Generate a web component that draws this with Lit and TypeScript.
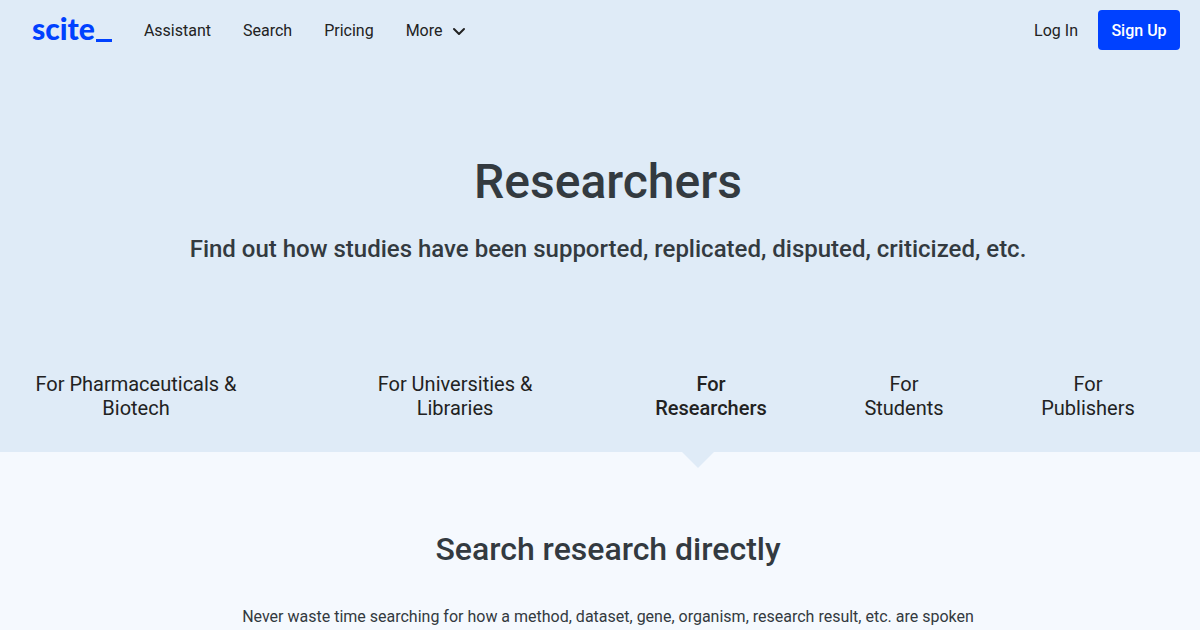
import { LitElement, html, css } from "lit";
import { customElement, state } from "lit/decorators.js";
import { classMap } from "lit/directives/class-map.js";

const TABS: [string, string][] = [
  ["For Pharmaceuticals &", "Biotech"],
  ["For Universities &", "Libraries"],
  ["For", "Researchers"],
  ["For", "Students"],
  ["For", "Publishers"],
];

@customElement("app-root")
export class AppRoot extends LitElement {
  @state() private active = 2;

  static styles = css`
    :host {
      display: block;
      min-height: 100vh;
      overflow-x: hidden;
      background: #f5f9fe;
      color: #333a40;
      font-family: Roboto, "Liberation Sans", sans-serif;
      font-size: 16px;
      line-height: 24px;
    }
    a {
      color: inherit;
      text-decoration: none;
    }
    .hero {
      position: relative;
      background: #dfebf7;
    }
    .bar {
      display: flex;
      align-items: center;
      height: 60px;
      padding: 0 20px 0 32px;
      color: #222222;
    }
    .logo {
      display: flex;
      margin-right: 32px;
      padding-bottom: 4px;
      font: 900 30px/40px Lato, sans-serif;
      color: #0041ff;
    }
    .dash {
      width: 16px;
      height: 3px;
      margin: 31px 0 0 1px;
      background: #0041ff;
    }
    nav {
      display: flex;
      flex: 1;
      gap: 32px;
      padding-top: 2px;
    }
    button {
      font: inherit;
      color: inherit;
      background: none;
      border: 0;
      padding: 0;
      cursor: pointer;
    }
    .more {
      display: flex;
      align-items: center;
      gap: 8px;
    }
    .login {
      padding-top: 2px;
    }
    .signup {
      min-width: 82px;
      margin-left: 20px;
      padding: 9px 12px 7px;
      border-radius: 4px;
      background: #0041ff;
      color: #ffffff;
      font-weight: 500;
    }
    .intro {
      padding: 92px 0 100px 16px;
      text-align: center;
    }
    h1,
    h2,
    p {
      margin: 0;
    }
    h1 {
      font-size: 48px;
      line-height: 60px;
      font-weight: 500;
    }
    .lead {
      margin-top: 21px;
      font-size: 24px;
      line-height: 32px;
      font-weight: 500;
    }
    .tabs {
      display: grid;
      grid-template-columns: 272fr 366fr 146fr 240fr 128fr;
      padding: 7px 48px 32px 0;
      color: #222222;
      font-size: 20px;
      line-height: 24px;
      text-align: center;
    }
    .tab {
      justify-self: center;
      white-space: nowrap;
    }
    .tab.on {
      font-weight: 500;
    }
    .pointer {
      position: absolute;
      top: 100%;
      left: 58.2%;
      margin-left: -16px;
      border: 16px solid transparent;
      border-top-color: #dfebf7;
      border-bottom: 0;
    }
    .details {
      padding: 77px 0 0 16px;
      text-align: center;
    }
    h2 {
      font-size: 32px;
      line-height: 40px;
      font-weight: 500;
    }
    .copy {
      max-width: 768px;
      margin: 36px auto 0;
    }
  `;

  render() {
    return html`
      <header class="hero">
        <div class="bar">
          <a class="logo" href="#" aria-label="scite_">scite<span class="dash"></span></a>
          <nav>
            <a href="#">Assistant</a>
            <a href="#">Search</a>
            <a href="#">Pricing</a>
            <button class="more">
              More
              <svg width="16" height="16" viewBox="0 0 16 16" fill="none" stroke="currentColor" stroke-width="2" stroke-linecap="round" stroke-linejoin="round">
                <path d="m3 6 5 5 5-5" />
              </svg>
            </button>
          </nav>
          <a class="login" href="#">Log In</a>
          <button class="signup">Sign Up</button>
        </div>
        <div class="intro">
          <h1>Researchers</h1>
          <p class="lead">Find out how studies have been supported, replicated, disputed, criticized, etc.</p>
        </div>
        <div class="tabs">
          ${TABS.map(
            ([a, b], i) => html`<button
              class=${classMap({ tab: true, on: i === this.active })}
              @click=${() => (this.active = i)}
            >${a}<br />${b}</button>`
          )}
        </div>
        <span class="pointer"></span>
      </header>
      <section class="details">
        <h2>Search research directly</h2>
        <p class="copy">Never waste time searching for how a method, dataset, gene, organism, research result, etc. are spoken</p>
      </section>
    `;
  }
}
